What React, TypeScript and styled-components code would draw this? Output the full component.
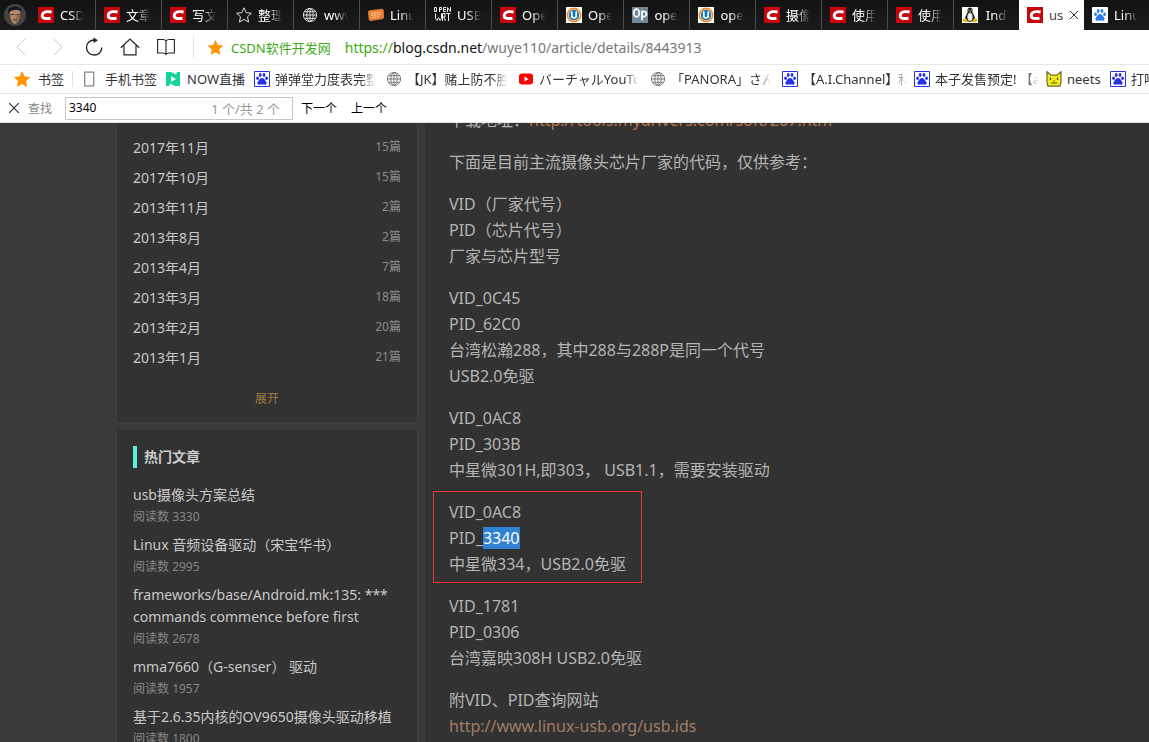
import React from "react";
import styled, { createGlobalStyle, css } from "styled-components";

const Global = createGlobalStyle`
  *{box-sizing:border-box}
  body{margin:0;background:#323232;font-family:"Noto Sans","Noto Sans CJK SC",sans-serif;font-size:12px;color:#333}
  button{font:inherit;border:0;background:none;padding:0;margin:0;color:inherit;cursor:pointer}
  a{color:inherit;text-decoration:none}
  ul,p,h2{margin:0;padding:0;list-style:none}
  svg{display:block;flex:none}
`;

const Shell = styled.div`display:flex;flex-direction:column;height:100vh;overflow:hidden;`;

/* ---------- tab strip ---------- */
const TabStrip = styled.nav`
  display:flex;flex:none;height:30px;overflow:hidden;
  background:linear-gradient(#121212,#1b1b1b);
`;
const Avatar = styled.button`display:flex;flex:none;align-items:center;justify-content:center;width:30px;`;
const Tab = styled.button<{ $active?: boolean }>`
  display:flex;flex:none;align-items:center;gap:6px;width:66px;height:30px;padding:0 0 0 8px;
  border-right:1px solid #4c4c4c;color:#fff;font-size:13px;line-height:20px;
  ${p => p.$active && css`background:#fff;color:#444;border-color:#fff;width:65px;margin-left:-1px;`}
`;
const fade = css`
  overflow:hidden;white-space:nowrap;
  mask-image:linear-gradient(to right,#000 calc(100% - 14px),transparent);
`;
const TabTitle = styled.span<{ $short?: boolean }>`
  ${fade}
  width:${p => (p.$short ? 14 : 24)}px;
  ${p => p.$short && css`mask-image:none;`}
`;

/* ---------- toolbars ---------- */
const AddressBar = styled.div`
  display:flex;flex:none;align-items:center;height:35px;padding-left:4px;
  background:#fff;border-bottom:1px solid #e8e8e8;
`;
const NavButton = styled.button`display:flex;align-items:center;justify-content:center;width:36px;height:34px;flex:none;`;
const NavButtons = styled.div`display:flex;width:189px;`;
const Rule = styled.span<{ $h: number }>`width:1px;height:${p => p.$h}px;background:#e0e0e0;flex:none;`;
const Site = styled.span`display:flex;align-items:center;gap:7px;margin-left:13px;color:#3bab12;font-size:13px;white-space:nowrap;`;
const Url = styled.span`margin-left:14px;font-size:14px;color:#777;white-space:nowrap;`;
const Scheme = styled.span`color:#3bab12;`;
const Host = styled.span`color:#111;`;

const BookmarkBar = styled.nav`
  display:flex;flex:none;align-items:center;height:29px;padding-left:13px;overflow:hidden;
  background:#fff;border-bottom:1px solid #e8e8e8;
`;
const Bookmark = styled.a<{ $w: number }>`
  display:flex;flex:none;align-items:center;gap:5px;width:${p => p.$w}px;font-size:13px;line-height:20px;color:#333;
`;
const RootBookmark = styled(Bookmark)`gap:7px;`;
const BookmarkList = styled.div`display:flex;margin-left:11px;`;
const BookmarkTitle = styled.span<{ $w?: number }>`${fade} ${p => (p.$w ? css`width:${p.$w}px;` : css`mask-image:none;`)}`;

const FindBar = styled.form`
  display:flex;flex:none;align-items:center;height:29px;padding-left:8px;
  background:#fff;border-bottom:1px solid #e4e4e4;
`;
const FindLabel = styled.label`margin-left:8px;color:#888;width:37px;white-space:nowrap;`;
const FindField = styled.div`
  display:flex;align-items:center;width:228px;height:23px;border:1px solid #c8c8c8;padding:0 12px 0 3px;
`;
const FindInput = styled.input`
  flex:1;min-width:0;border:0;outline:0;padding:0;background:none;font:inherit;line-height:20px;color:#000;
`;
const FindCount = styled.span`color:#999;font-size:13px;white-space:nowrap;`;
const FindSteps = styled.div`display:flex;gap:14px;margin-left:8px;`;
const FindStep = styled.button`color:#000;white-space:nowrap;`;

/* ---------- blog page ---------- */
const Viewport = styled.div`flex:1;min-height:0;overflow:hidden;background:#3a3a3a;`;
const Page = styled.div`display:flex;align-items:stretch;gap:8px;margin:-16px 0 0;padding-left:117px;`;
const Sidebar = styled.aside`display:flex;flex-direction:column;flex:none;gap:8px;width:300px;`;
const Card = styled.section<{ $first?: boolean }>`
  background:#323232;padding:${p => (p.$first ? "26px 16px 11px" : "16px 16px")};
  box-shadow:0 1px 3px #444;
`;
const MonthLink = styled.a`
  display:flex;justify-content:space-between;height:30px;line-height:30px;font-size:14px;color:#c8c8c8;
`;
const Amount = styled.span`font-size:12px;line-height:28px;color:#8a8a8a;`;
const Expand = styled.button`display:block;width:100%;margin-top:14px;line-height:24px;color:#a07840;`;
const CardTitle = styled.h2`
  border-left:4px solid #5ff0e4;padding-left:7px;font-size:14px;line-height:22px;font-weight:700;color:#ccc;
`;
const Hot = styled.li`padding-top:6px;`;
const HotList = styled.ul`padding-top:10px;`;
const HotLink = styled.a`display:block;font-size:14px;line-height:22px;color:#c8c8c8;`;
const Reads = styled.p`font-size:12px;line-height:22px;color:#868686;`;

const Article = styled.main`
  flex:1;min-width:0;padding:0 24px 40px;background:#323232;color:#b4b4b4;
  font-size:16px;line-height:26px;
`;
const Para = styled.p`margin-bottom:16px;`;
const Boxed = styled.p`
  width:209px;margin:-8px 0 10px -16px;padding:7px 15px 5px;border:1px solid #f03434;white-space:nowrap;
`;
const Link = styled.a<{ $bright?: boolean }>`color:${p => (p.$bright ? "#b87548" : "#a07c66")};`;
const Found = styled.mark`background:#3182d2;color:#fff;padding:0;`;

/* ---------- icons ---------- */
const Csdn = () => (
  <svg width="16" height="16" viewBox="0 0 16 16"><path fill="#c9040d" d="M0 0h16v16H0z" /><path d="M13.600 5C9.500 4.300 5 4 4.300 8s4 3.900 8.200 3.200" fill="none" stroke="#fff" strokeWidth="2.900" /></svg>
);
const Star = ({ s = 16, line }: { s?: number; line?: boolean }) => (
  <svg width={s} height={s} viewBox="0 0 16 16"><path d="M8 .8l2.200 4.900 5.200.5-3.900 3.600 1.100 5.300L8 12.400l-4.600 2.700 1.100-5.300L.6 6.200l5.200-.5z" fill={line ? "none" : "#ff9400"} stroke={line ? "#ddd" : "none"} /></svg>
);
const Globe = ({ c }: { c: string }) => (
  <svg width="16" height="16" viewBox="0 0 16 16" fill="none" stroke={c}><circle cx="8" cy="8" r="6.600" /><ellipse cx="8" cy="8" rx="3.200" ry="6.600" /><path d="M8 1.400v13.200M1.400 8h13.200M2.500 4.700h11M2.500 11.300h11" /></svg>
);
const Ticket = () => (
  <svg width="16" height="16" viewBox="0 0 16 16"><path d="M1.500 3.800l12.500-1.600q1.200 0 1.300 1.200l.4 6.800q0 1.200-1.200 1.400L2.600 13.600q-1.200.1-1.400-1.100L.4 5.200q-.1-1.200 1.100-1.400z" fill="#f37a2a" stroke="#ffa262" strokeWidth=".6" /><path d="M3 6.400l9.500-1.200M3.300 8.500l9.700-1.200M3.600 10.600l7-.9" stroke="#ffe2c8" strokeDasharray="2 .7" /></svg>
);
const OpenWrt = () => (
  <svg width="17" height="16" viewBox="0 0 17 16" fill="none" stroke="#eee"><path d="M.5.5h2v4h-2zM5.500 5V.5h2v2h-2M12 .5H9.500v4H12M9.500 2.500H12M13.500 5V.5l3 4V0M1.500 6.500v5l1.500 2 1.500-3 1.500 3 1.500-2v-5M8.500 14V6.500h2.500v3.500H8.500m1.500 0l1.500 4M12 6.500h4.500M14.500 6.500V14" /></svg>
);
const Ubuntu = () => (
  <svg width="16" height="16" viewBox="0 0 16 16"><path fill="#fff" d="M0 0h16v16H0z" /><circle cx="8" cy="8" r="6.600" fill="none" stroke="#f08a1c" strokeWidth="1.600" /><circle cx="8" cy="8" r="5.200" fill="#1673bd" /><path d="M5.800 4.500V9c0 2.600 4.400 2.600 4.400 0V4.500" fill="none" stroke="#fff" strokeWidth="1.700" /></svg>
);
const OpBadge = () => (
  <svg width="16" height="16" viewBox="0 0 16 16"><path fill="#708899" d="M0 0h16v16H0z" /><ellipse cx="4.500" cy="6" rx="2.800" ry="3.800" fill="none" stroke="#fff" strokeWidth="1.700" /><path d="M10 3.500v10M10 5.500c1-1.500 4.500-1.500 4.500 1.500s-3.500 3-4.500 1.700" fill="none" stroke="#fff" strokeWidth="1.700" /></svg>
);
const Tux = () => (
  <svg width="16" height="16" viewBox="0 0 16 16"><path fill="#fff" d="M0 0h16v16H0z" /><path d="M5.500 3C5.500-.5 10.500-.5 10.500 3v2.500c1 2 3 4.500 2.500 7.500l-5 2-5-2c-.5-3 1.500-5 2.500-7.500z" fill="#191919" /><ellipse cx="8" cy="10" rx="2.600" ry="4" fill="#eee" /><path d="M6.500 4.500h3L8 6z" fill="#f3b91c" /><path d="M.8 12l3-1 2.500 4-5 .3zM15.200 12l-3-1-2.500 4 5 .3z" fill="#e8b51c" /><path d="M6.800 2.500v1M9.200 2.500v1" stroke="#fff" /></svg>
);
const Paw = ({ c, frame }: { c: string; frame?: boolean }) => (
  <svg width="16" height="16" viewBox="0 0 16 16"><path d="M.5.5h15v15H.5z" fill="#fff" stroke={frame ? c : "#fff"} /><g fill={c}><ellipse cx="3.600" cy="7.300" rx="1.400" ry="1.800" /><ellipse cx="6.200" cy="4" rx="1.400" ry="1.900" /><ellipse cx="10" cy="4" rx="1.400" ry="1.900" /><ellipse cx="12.600" cy="7.300" rx="1.400" ry="1.800" /><path d="M8 7c2 0 2.500 1.800 4 3.400 1.400 1.600.4 3.600-1.600 3.300-1.600-.3-3.200-.3-4.800 0-2 .3-3-1.700-1.600-3.300C5.500 8.800 6 7 8 7z" /></g></svg>
);
const Face = () => (
  <svg width="22" height="22" viewBox="0 0 22 22"><circle cx="11" cy="11" r="11" fill="#444" /><path d="M6 8c0-3 10-3 10 0l-.6 7c-1 3-3.500 5-4.600 5s-4-3-4.300-6z" fill="#b58a6a" /><path d="M4 7C5 1 17 1 18 7c-4-2-10-2-14 2z" fill="#15181c" /><path d="M7 10.500h3M12.500 10.500h2.500M9 16h4" stroke="#3b2a20" /><path d="M11 10h5l-1 6-3 4z" fill="#7b5640" opacity=".6" /></svg>
);
const Close = ({ s }: { s: number }) => (
  <svg width={s} height={s} viewBox="0 0 10 10" stroke="#333" fill="none"><path d="M1 1l8 8M9 1l-8 8" /></svg>
);
const Chevron = ({ right }: { right?: boolean }) => (
  <svg width="18" height="18" viewBox="0 0 18 18" fill="none" stroke="#ccc"><path d={right ? "M5 1l8 8-8 8" : "M12 1L4 9l8 8"} /></svg>
);
const Reload = () => (
  <svg width="20" height="20" viewBox="0 0 20 20" fill="none" stroke="#222" strokeWidth="1.300"><path d="M10.500 3C6 3 2.500 6 2.500 10.600c0 4.200 3.400 7.400 7.700 7.400 4.200 0 7.500-3.100 7.600-7.400" /><path d="M9.500.5L14 3.300 9.500 6z" fill="#222" stroke="none" /></svg>
);
const Home = () => (
  <svg width="20" height="20" viewBox="0 0 20 20" fill="none" stroke="#222" strokeWidth="1.200"><path d="M.8 10.700L10 2l9.200 8.700M4 8.500v9.300h12V8.500" /></svg>
);
const Book = () => (
  <svg width="18" height="18" viewBox="0 0 18 18" fill="none" stroke="#222" strokeWidth="1.100"><path d="M9 2.800Q8 1.500 6 1.500H.6v13.500H6q2 0 3 1.500 1-1.500 3-1.500h5.400V1.500H12q-2 0-3 1.300zM9 2.800v13.700" /></svg>
);
const Phone = () => (
  <svg width="16" height="16" viewBox="0 0 16 16"><path d="M.7 1.200h9v13.600h-9z" fill="none" stroke="#888" strokeWidth="1.300" /></svg>
);
const Now = () => (
  <svg width="16" height="16" viewBox="0 0 16 16"><path d="M0 1h5l5 2.500L11 1h3v14H9l-5-2.500L3 15H0z" fill="#12d59a" /><path d="M5 5l5 3-5 3z" fill="#fff" /></svg>
);
const Tube = () => (
  <svg width="16" height="16" viewBox="0 0 16 16"><rect x="1" y="2.500" width="14" height="11" rx="3" fill="#f00" /><path d="M6.500 5.500l4 2.500-4 2.500z" fill="#fff" /></svg>
);
const Cat = () => (
  <svg width="16" height="16" viewBox="0 0 16 16"><path d="M1 .8l4 3.400h6L15 .8v10.700l-1 3.700H2l-1-3.700z" fill="#f2ec1a" stroke="#6c6a34" strokeWidth="1.200" /><path d="M4.500 6.500v2.500M11.500 6.500v2.500M5 12h6M7.500 10h1.500" stroke="#55521d" strokeWidth="1.200" /></svg>
);

const tabs: { icon: React.ReactNode; title: string; active?: boolean }[] = [
  { icon: <Csdn />, title: "CSD" },
  { icon: <Csdn />, title: "文章" },
  { icon: <Csdn />, title: "写文" },
  { icon: <Star line />, title: "整理" },
  { icon: <Globe c="#ddd" />, title: "www" },
  { icon: <Ticket />, title: "Linu" },
  { icon: <OpenWrt />, title: "USB" },
  { icon: <Csdn />, title: "Ope" },
  { icon: <Ubuntu />, title: "Ope" },
  { icon: <OpBadge />, title: "ope" },
  { icon: <Ubuntu />, title: "ope" },
  { icon: <Csdn />, title: "摄像" },
  { icon: <Csdn />, title: "使用" },
  { icon: <Csdn />, title: "使用" },
  { icon: <Tux />, title: "Ind" },
  { icon: <Csdn />, title: "us", active: true },
  { icon: <Paw c="#2b7de9" />, title: "Linu" },
];

const bookmarks: { icon: React.ReactNode; title: string; w: number; clip?: number }[] = [
  { icon: <Phone />, title: "手机书签", w: 82 },
  { icon: <Now />, title: "NOW直播", w: 88 },
  { icon: <Paw c="#2932e1" frame />, title: "弹弹堂力度表完整", w: 132, clip: 100 },
  { icon: <Globe c="#777" />, title: "【JK】赌上防不胜", w: 132, clip: 100 },
  { icon: <Tube />, title: "バーチャルYouTu", w: 132, clip: 100 },
  { icon: <Globe c="#777" />, title: "「PANORA」さん", w: 132, clip: 100 },
  { icon: <Paw c="#2932e1" frame />, title: "【A.I.Channel】科", w: 132, clip: 104 },
  { icon: <Paw c="#2932e1" frame />, title: "本子发售预定! 【a", w: 132, clip: 104 },
  { icon: <Cat />, title: "neets", w: 64 },
  { icon: <Paw c="#2932e1" frame />, title: "打哈", w: 132, clip: 100 },
];

const months: [string, number][] = [
  ["2017年11月", 15], ["2017年10月", 15], ["2013年11月", 2], ["2013年8月", 2],
  ["2013年4月", 7], ["2013年3月", 18], ["2013年2月", 20], ["2013年1月", 21],
];

const hot: [string, number][] = [
  ["usb摄像头方案总结", 3330],
  ["Linux 音频设备驱动（宋宝华书）", 2995],
  ["frameworks/base/Android.mk:135: *** commands commence before first", 2678],
  ["mma7660（G-senser） 驱动", 1957],
  ["基于2.6.35内核的OV9650摄像头驱动移植", 1800],
];

export default function App() {
  return (
    <Shell>
      <Global />
      <TabStrip>
        <Avatar aria-label="账号"><Face /></Avatar>
        {tabs.map((t, i) => (
          <Tab key={i} $active={t.active}>
            {t.icon}
            <TabTitle $short={t.active}>{t.title}</TabTitle>
            {t.active && <Close s={10} />}
          </Tab>
        ))}
      </TabStrip>
      <AddressBar>
        <NavButtons>
          <NavButton aria-label="后退"><Chevron /></NavButton>
          <NavButton aria-label="前进"><Chevron right /></NavButton>
          <NavButton aria-label="刷新"><Reload /></NavButton>
          <NavButton aria-label="主页"><Home /></NavButton>
          <NavButton aria-label="阅读"><Book /></NavButton>
        </NavButtons>
        <Rule $h={22} />
        <Site><Star s={17} />CSDN软件开发网</Site>
        <Url><Scheme>https://</Scheme><Host>blog.csdn.net</Host>/wuye110/article/details/8443913</Url>
      </AddressBar>
      <BookmarkBar>
        <RootBookmark href="#" $w={59}><Star s={18} />书签</RootBookmark>
        <Rule $h={16} />
        <BookmarkList>
          {bookmarks.map((b, i) => (
            <Bookmark key={i} href="#" $w={b.w}>
              {b.icon}
              <BookmarkTitle $w={b.clip}>{b.title}</BookmarkTitle>
            </Bookmark>
          ))}
        </BookmarkList>
      </BookmarkBar>
      <FindBar onSubmit={e => e.preventDefault()}>
        <button type="button" aria-label="关闭"><Close s={12} /></button>
        <FindLabel htmlFor="find">查找</FindLabel>
        <FindField>
          <FindInput id="find" defaultValue="3340" />
          <FindCount>1 个/共 2 个</FindCount>
        </FindField>
        <FindSteps>
          <FindStep type="submit">下一个</FindStep>
          <FindStep type="button">上一个</FindStep>
        </FindSteps>
      </FindBar>
      <Viewport>
        <Page>
          <Sidebar>
            <Card $first>
              {months.map(([m, n]) => (
                <MonthLink key={m} href="#">{m}<Amount>{n}篇</Amount></MonthLink>
              ))}
              <Expand>展开</Expand>
            </Card>
            <Card>
              <CardTitle>热门文章</CardTitle>
              <HotList>
                {hot.map(([title, n]) => (
                  <Hot key={n}>
                    <HotLink href="#">{title}</HotLink>
                    <Reads>阅读数 {n}</Reads>
                  </Hot>
                ))}
              </HotList>
            </Card>
          </Sidebar>
          <Article>
            <Para>下载地址：<Link $bright href="#">http://tools.mydrivers.com/soft/267.htm</Link></Para>
            <Para>下面是目前主流摄像头芯片厂家的代码，仅供参考：</Para>
            <Para>VID（厂家代号）<br />PID（芯片代号）<br />厂家与芯片型号</Para>
            <Para>VID_0C45<br />PID_62C0<br />台湾松瀚288，其中288与288P是同一个代号<br />USB2.0免驱</Para>
            <Para>VID_0AC8<br />PID_303B<br />中星微301H,即303， USB1.1，需要安装驱动</Para>
            <Boxed>VID_0AC8<br />PID_<Found>3340</Found><br />中星微334，USB2.0免驱</Boxed>
            <Para>VID_1781<br />PID_0306<br />台湾嘉映308H USB2.0免驱</Para>
            <Para>附VID、PID查询网站<br /><Link href="#">http://www.linux-usb.org/usb.ids</Link></Para>
          </Article>
        </Page>
      </Viewport>
    </Shell>
  );
}
